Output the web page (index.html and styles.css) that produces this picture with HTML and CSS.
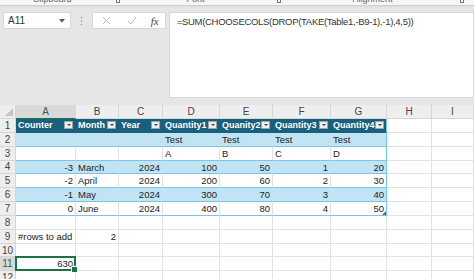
FILE: index.html
```html
<!DOCTYPE html>
<html lang="en">
    <head>
        <meta charset="UTF-8">
        <meta name="viewport" content="width=device-width, initial-scale=1.0">
        <title>Book1 - Excel</title>
        <link rel="stylesheet" href="styles.css">
    </head>
    <body>
        <div class="ribbon">
            <span class="group g-clip">Clipboard</span><span class="launch"></span>
            <span class="group g-font">Font</span><span class="launch"></span>
            <span class="group g-align">Alignment</span><span class="launch"></span>
        </div>
        <div class="fbar">
            <div class="namebox">
                <span>A11</span>
                <svg width="6" height="4" viewBox="0 0 6 4"><path d="M0 0h6L3 3.5z" fill="#555"/></svg>
            </div>
            <div class="dots">
                <svg width="3" height="10" viewBox="0 0 3 10"><circle cx="1.5" cy="1.5" r="0.8" fill="#999"/><circle cx="1.5" cy="5" r="0.8" fill="#999"/><circle cx="1.5" cy="8.5" r="0.8" fill="#999"/></svg>
            </div>
            <div class="fxbox">
                <svg width="9" height="9" viewBox="0 0 9 9"><path d="M1 1l7 7M8 1l-7 7" stroke="#bbb" stroke-width="1" fill="none"/></svg>
                <svg width="10" height="9" viewBox="0 0 10 9"><path d="M1 5l3 3 5-7" stroke="#bbb" stroke-width="1" fill="none"/></svg>
                <span class="fx">fx</span>
            </div>
            <div class="formula">=SUM(CHOOSECOLS(DROP(TAKE(Table1,-B9-1),-1),4,5))</div>
        </div>
        <div class="sheet">
            <div class="grid">
                <div class="ch corner"></div>
                <div class="ch active">A</div>
                <div class="ch">B</div>
                <div class="ch">C</div>
                <div class="ch">D</div>
                <div class="ch">E</div>
                <div class="ch">F</div>
                <div class="ch">G</div>
                <div class="ch">H</div>
                <div class="ch">I</div>

                <div class="rh">1</div>
                <div class="c hd"><span>Counter</span><i class="dd"></i></div>
                <div class="c hd"><span>Month</span><i class="dd"></i></div>
                <div class="c hd"><span>Year</span><i class="dd"></i></div>
                <div class="c hd"><span>Quantity1</span><i class="dd"></i></div>
                <div class="c hd"><span>Quanity2</span><i class="dd"></i></div>
                <div class="c hd"><span>Quantity3</span><i class="dd"></i></div>
                <div class="c hd last"><span>Quantity4</span><i class="dd"></i></div>
                <div class="c"></div>
                <div class="c"></div>

                <div class="rh">2</div>
                <div class="c band"></div>
                <div class="c band"></div>
                <div class="c band"></div>
                <div class="c band">Test</div>
                <div class="c band">Test</div>
                <div class="c band">Test</div>
                <div class="c band last">Test</div>
                <div class="c"></div>
                <div class="c"></div>

                <div class="rh">3</div>
                <div class="c row"></div>
                <div class="c row"></div>
                <div class="c row"></div>
                <div class="c row">A</div>
                <div class="c row">B</div>
                <div class="c row">C</div>
                <div class="c row last">D</div>
                <div class="c"></div>
                <div class="c"></div>

                <div class="rh">4</div>
                <div class="c band num">-3</div>
                <div class="c band">March</div>
                <div class="c band num">2024</div>
                <div class="c band num">100</div>
                <div class="c band num">50</div>
                <div class="c band num">1</div>
                <div class="c band num last">20</div>
                <div class="c"></div>
                <div class="c"></div>

                <div class="rh">5</div>
                <div class="c row num">-2</div>
                <div class="c row">April</div>
                <div class="c row num">2024</div>
                <div class="c row num">200</div>
                <div class="c row num">60</div>
                <div class="c row num">2</div>
                <div class="c row num last">30</div>
                <div class="c"></div>
                <div class="c"></div>

                <div class="rh">6</div>
                <div class="c band num">-1</div>
                <div class="c band">May</div>
                <div class="c band num">2024</div>
                <div class="c band num">300</div>
                <div class="c band num">70</div>
                <div class="c band num">3</div>
                <div class="c band num last">40</div>
                <div class="c"></div>
                <div class="c"></div>

                <div class="rh">7</div>
                <div class="c row num">0</div>
                <div class="c row">June</div>
                <div class="c row num">2024</div>
                <div class="c row num">400</div>
                <div class="c row num">80</div>
                <div class="c row num">4</div>
                <div class="c row num last corner-end">50</div>
                <div class="c"></div>
                <div class="c"></div>

                <div class="rh">8</div>
                <div class="c"></div><div class="c"></div><div class="c"></div><div class="c"></div><div class="c"></div><div class="c"></div><div class="c"></div><div class="c"></div><div class="c"></div>

                <div class="rh">9</div>
                <div class="c">#rows to add</div>
                <div class="c num">2</div>
                <div class="c"></div><div class="c"></div><div class="c"></div><div class="c"></div><div class="c"></div><div class="c"></div><div class="c"></div>

                <div class="rh">10</div>
                <div class="c"></div><div class="c"></div><div class="c"></div><div class="c"></div><div class="c"></div><div class="c"></div><div class="c"></div><div class="c"></div><div class="c"></div>

                <div class="rh active">11</div>
                <div class="c num sel">630</div>
                <div class="c"></div><div class="c"></div><div class="c"></div><div class="c"></div><div class="c"></div><div class="c"></div><div class="c"></div><div class="c"></div>

                <div class="rh">12</div>
                <div class="c"></div><div class="c"></div><div class="c"></div><div class="c"></div><div class="c"></div><div class="c"></div><div class="c"></div><div class="c"></div><div class="c"></div>
            </div>
        </div>
    </body>
</html>
```

FILE: styles.css
```css
* {
    box-sizing: border-box;
}

body {
    margin: 0;
    width: 474px;
    height: 279px;
    overflow: hidden;
    background-color: #e6e6e6;
    font-family: "Liberation Sans", Arial, sans-serif;
    color: #222222;
}

.ribbon {
    height: 5px;
    overflow: hidden;
    background-color: #f6f6f6;
    box-shadow: 0 1px 2px #c8c8c8;
    position: relative;
    display: flex;
    font-size: 9px;
    color: #666666;
    line-height: 9px;
}

.group {
    margin-top: -5px;
}

.g-clip {
    margin-left: 33px;
}

.g-font {
    margin-left: 67px;
}

.g-align {
    margin-left: 72px;
}

.launch {
    width: 4px;
    height: 4px;
    border: 1px solid #777777;
    margin-top: -1px;
}

.g-clip + .launch {
    margin-left: 44px;
}

.g-font + .launch {
    margin-left: 72px;
}

.g-align + .launch {
    margin-left: 67px;
}

.fbar {
    height: 93px;
    display: flex;
    align-items: flex-start;
    padding: 7px 0 0 3px;
}

.namebox {
    width: 69px;
    height: 17px;
    background-color: white;
    border: 1px solid #d8d8d8;
    display: flex;
    align-items: center;
    justify-content: space-between;
    padding: 0 5px 0 4px;
    font-size: 10px;
    color: #333333;
}

.dots {
    width: 21px;
    height: 17px;
    display: flex;
    align-items: center;
    justify-content: center;
}

.fxbox {
    width: 75px;
    height: 17px;
    background-color: white;
    border: 1px solid #d8d8d8;
    display: flex;
    align-items: center;
    padding: 0 0 0 9px;
    gap: 16px;
}

.fx {
    font-family: "Liberation Serif", serif;
    font-style: italic;
    font-size: 11px;
    color: #444444;
    margin-left: -2px;
}

.formula {
    margin-left: 3px;
    width: 310px;
    height: 86px;
    background-color: white;
    border: 1px solid #d8d8d8;
    font-size: 9.5px;
    letter-spacing: -0.3px;
    color: #333333;
    padding: 3px 0 0 7px;
}

.sheet {
    margin-top: 7px;
}

.grid {
    display: grid;
    grid-template-columns: 16px 60px 43px 44px 57px 53px 58px 56px 45px 42px;
    grid-template-rows: 14px;
    grid-auto-rows: 13.85px;
    background-color: white;
}

.ch, .rh {
    background-color: #eeeeee;
    color: #444444;
    font-size: 10px;
    display: flex;
    align-items: center;
    justify-content: center;
    border-right: 1px solid #d6d6d6;
    border-bottom: 1px solid #d6d6d6;
}

.ch.active, .rh.active {
    background-color: #d9d9d9;
    color: #1e6b40;
}

.ch.active {
    border-bottom: 1px solid #1e7145;
}

.rh.active {
    border-right: 1px solid #1e7145;
}

.corner {
    position: relative;
}

.corner::after {
    content: "";
    position: absolute;
    right: 2px;
    bottom: 2px;
    border-left: 8px solid transparent;
    border-bottom: 8px solid #c4c4c4;
}

.c {
    font-size: 9.5px;
    line-height: 13px;
    padding: 0 2px;
    white-space: nowrap;
    overflow: visible;
    border-right: 1px solid #e2e2e2;
    border-bottom: 1px solid #e2e2e2;
}

.num {
    text-align: right;
}

.hd {
    background-color: #17607e;
    color: white;
    font-size: 9px;
    font-weight: bold;
    display: flex;
    align-items: center;
    justify-content: space-between;
    border-right-color: #17607e;
    border-bottom-color: #17607e;
    padding-right: 2px;
}

.dd {
    flex: none;
    width: 9px;
    height: 8px;
    background-color: #ededed;
    border: 1px solid #a0a0a0;
    position: relative;
}

.dd::after {
    content: "";
    position: absolute;
    left: 1.5px;
    top: 2px;
    border-left: 2.5px solid transparent;
    border-right: 2.5px solid transparent;
    border-top: 2.5px solid #444444;
}

.band {
    background-color: #c1e4f5;
    border-right-color: #c1e4f5;
    border-bottom-color: #7cc4e6;
}

.row {
    border-bottom-color: #7cc4e6;
}

.last {
    border-right-color: #7cc4e6;
}

.hd.last {
    border-right-color: #7cc4e6;
}

.corner-end {
    position: relative;
}

.corner-end::after {
    content: "";
    position: absolute;
    right: 0;
    bottom: 0;
    border-left: 4px solid transparent;
    border-bottom: 4px solid #3a6fb0;
}

.sel {
    position: relative;
}

.sel::before {
    content: "";
    position: absolute;
    left: -1px;
    top: -1px;
    right: -1px;
    bottom: -1px;
    border: 2px solid #1e7145;
}

.sel::after {
    content: "";
    position: absolute;
    right: -3px;
    bottom: -3px;
    width: 5px;
    height: 5px;
    background-color: #1e7145;
    border: 1px solid white;
}
```
